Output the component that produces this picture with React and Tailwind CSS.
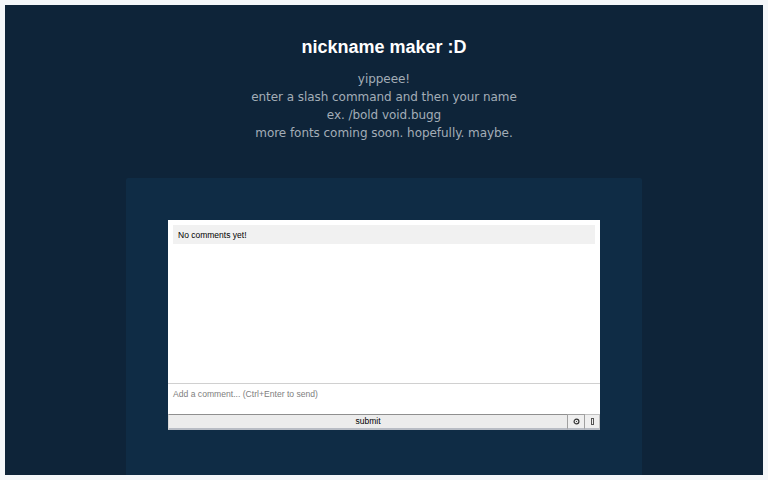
const App = () => {
  return (
    <div className="w-[768px] h-[480px] overflow-hidden bg-[#f4f7fa] p-[5px] font-['Liberation_Sans',Arial,sans-serif]">
      <div className="h-[470px] w-[758px] overflow-hidden bg-[#0e2439] flex flex-col items-center pt-[32px]">
        <h1 className="text-[18px] leading-[21px] font-bold text-white">nickname maker :D</h1>
        <div className="mt-[12px] text-center text-[12px] leading-[18px] tracking-[-0.004em] text-[#a3adb7] font-['DejaVu_Sans',sans-serif]">
          <p>yippeee!</p>
          <p>enter a slash command and then your name</p>
          <p>ex. /bold void.bugg</p>
          <p>more fonts coming soon. hopefully. maybe.</p>
        </div>

        <div className="mt-[36px] w-[516px] flex-1 rounded-t-[2px] bg-[#0f2c45] px-[42px] pt-[42px]">
          <div className="flex h-[210px] w-[432px] flex-col bg-white">
            <div className="flex-1 p-[5px]">
              <div className="h-[19px] bg-[#f1f1f1] px-[5px] pt-[3px] text-[8.5px] leading-[15px] text-black">No comments yet!</div>
            </div>
            <div className="h-[31px] border-t border-[#d0d0d0] px-[5px] pt-[5px] text-[8.6px] leading-[11px] text-[#808080]">
              Add a comment... (Ctrl+Enter to send)
            </div>
            <div className="flex h-[16px] text-[8.5px] text-black">
              <button className="flex-1 border-t border-l border-[#8f8f8f] border-l-[#d8d8d8] border-b-2 border-b-[#b8bcc4] bg-[#ececec] leading-none">submit</button>
              <button className="flex w-[18px] items-center justify-center border-x border-t border-[#a0a0a0] border-b-2 border-b-[#b8bcc4] bg-[#efefef]">
                <svg width="7" height="7" viewBox="0 0 7 7" fill="none" stroke="#333" strokeWidth="1.2">
                  <circle cx="3.5" cy="3.5" r="2.4" />
                  <circle cx="3.5" cy="3.5" r="0.6" fill="#333" stroke="none" />
                </svg>
              </button>
              <button className="flex w-[15px] items-center justify-center border-t border-r border-[#c0c0c0] border-b-2 border-b-[#b8bcc4] bg-[#efefef]">
                <span className="block h-[7px] w-[3px] border border-[#555]"></span>
              </button>
            </div>
          </div>
        </div>
      </div>
    </div>
  );
};

export default App;
